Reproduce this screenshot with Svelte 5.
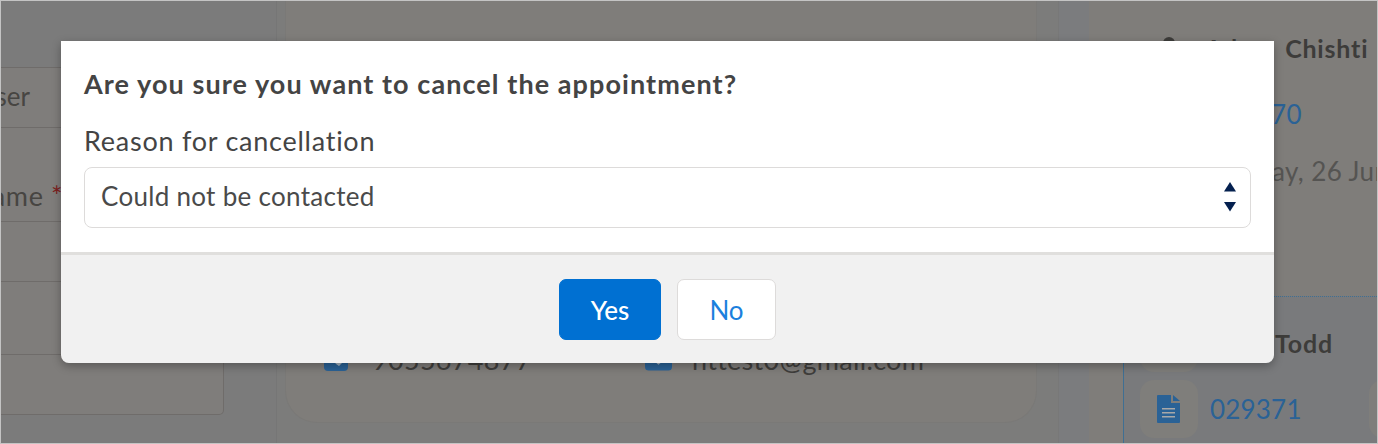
<script>
  let reason = $state('Could not be contacted');
</script>

<div class="page">
  <div class="backdrop-page">
    <section class="left">
      <div class="field user"><span class="field-text">User</span></div>
      <div class="field name"><span class="field-text">Name <b>*</b></span></div>
      <div class="field short"></div>
      <div class="field tall"></div>
      <div class="field box"></div>
    </section>

    <section class="center">
      <div class="card">
        <div class="contact">
          <span class="contact-item phone">
            <svg viewBox="0 0 24 24" class="mini">
              <rect width="24" height="24" rx="4" fill="#2a6296" />
              <path d="M8 10c1 4 3 7 7 9l3-3-4-3-2 1-1-2z" fill="#a8b4c0" />
            </svg>
            9055674877
          </span>
          <span class="contact-item mail">
            <svg viewBox="0 0 28 24" class="mini wide">
              <rect width="28" height="24" rx="4" fill="#2a6296" />
              <path d="M8 13h12l-6 5z" fill="#a8b4c0" />
            </svg>
            nttest0@gmail.com
          </span>
        </div>
      </div>
    </section>

    <div class="strip"></div>

    <section class="right">
      <div class="upper">
        <div class="person">
          <svg viewBox="0 0 24 24" class="person-icon"><circle cx="12" cy="7" r="6" fill="#3d3c3a" /><path d="M1 24c0-6 5-9 11-9s11 3 11 9z" fill="#3d3c3a" /></svg>
          <span>Adam</span>
          <span>Chishti</span>
        </div>
        <div class="num">029370</div>
        <div class="date">Sunday, 26 June</div>
      </div>
      <div class="lower">
        <div class="doc-row todd-row">
          <span class="doc-tile"></span>
          <span class="person todd">Todd</span>
        </div>
        <div class="doc-row">
          <span class="doc-tile">
            <svg viewBox="0 0 24 28" class="doc">
              <path d="M1 0h13v8h9v19a1 1 0 0 1-1 1H1a1 1 0 0 1-1-1V1a1 1 0 0 1 1-1z" fill="#2a6296" />
              <path d="M16 0l7 6h-7z" fill="#2a6296" />
              <path d="M5 13h13v1.600H5zM5 17h13v1.600H5zM5 21h13v1.600H5z" fill="#a8a8a8" />
            </svg>
          </span>
          <span class="doc-num">029371</span>
          <span class="doc-tile"></span>
        </div>
      </div>
    </section>
  </div>

  <div class="modal" role="dialog" aria-modal="true" aria-labelledby="cancel-title">
    <div class="modal-body">
      <h2 id="cancel-title">Are you sure you want to cancel the appointment?</h2>
      <label for="reason">Reason for cancellation</label>
      <div class="select-wrap">
        <select id="reason" bind:value={reason}>
          <option>Could not be contacted</option>
        </select>
        <svg class="arrows" viewBox="0 0 12 30" aria-hidden="true">
          <path d="M6 0l6 9.500H0z" fill="#04204f" />
          <path d="M6 29.500L0 20h12z" fill="#04204f" />
        </svg>
      </div>
    </div>
    <div class="modal-footer">
      <button type="button" class="yes">Yes</button>
      <button type="button" class="no">No</button>
    </div>
  </div>
</div>

<style>
  :global(body) {
    margin: 0;
    font-family: Lato, "Open Sans", sans-serif;
  }
  .page {
    position: relative;
    width: 1378px;
    height: 444px;
    overflow: hidden;
    box-sizing: border-box;
    border: 1px solid #c4c4c4;
    background: #7c7c7c;
  }
  .backdrop-page {
    display: flex;
    height: 100%;
  }
  .left {
    width: 276px;
    flex: none;
    background: #7b7b7b;
    border-right: 1px solid #767676;
    padding-top: 66px;
    box-sizing: border-box;
  }
  .field {
    width: 223px;
    box-sizing: border-box;
    border-top: 1px solid #6f6c6a;
    background: #7f7d7b;
    color: #474542;
    font-size: 27px;
    letter-spacing: 0.6px;
    display: flex;
    white-space: nowrap;
  }
  .field.user {
    height: 60px;
    align-items: center;
    font-size: 26px;
    letter-spacing: 0;
  }
  .field.name {
    height: 94px;
    align-items: flex-end;
    padding-bottom: 9px;
  }
  .field.short {
    height: 60px;
  }
  .field.tall {
    height: 73px;
  }
  .field.box {
    height: 61px;
    border-right: 1px solid #6f6c6a;
    border-bottom: 1px solid #6f6c6a;
    border-radius: 0 0 5px 0;
  }
  .user .field-text {
    margin: -4px 0 0 -24px;
  }
  .name .field-text {
    margin-left: -30px;
  }
  .field b {
    color: #7c2020;
    font-weight: 400;
  }
  .center {
    flex: 1;
    background: #7c7c7b;
    padding: 0 21px 0 8px;
    border-right: 1px solid #787878;
  }
  .card {
    height: 422px;
    box-sizing: border-box;
    border: 1px solid #7a7977;
    border-top: none;
    border-radius: 0 0 32px 32px;
    background: #7f7d7a;
    padding-top: 342px;
  }
  .contact {
    display: flex;
    color: #3f3e3c;
    font-size: 27px;
    letter-spacing: 0.3px;
  }
  .contact-item {
    display: flex;
    align-items: center;
    gap: 24px;
    white-space: nowrap;
  }
  .phone {
    margin-left: 38px;
    width: 321px;
  }
  .mini {
    width: 24px;
    height: 24px;
    margin-bottom: 2px;
  }
  .mini.wide {
    width: 27px;
  }
  .mail {
    gap: 20px;
  }
  .strip {
    width: 30px;
    flex: none;
    background: #7b7c7e;
  }
  .right {
    width: 288px;
    flex: none;
    background: #7f7d7a;
    display: flex;
    flex-direction: column;
    overflow: hidden;
  }
  .upper {
    height: 295px;
    flex: none;
    box-sizing: border-box;
    padding-top: 32px;
    white-space: nowrap;
  }
  .person {
    color: #3d3c3a;
    font-weight: 700;
    font-size: 25px;
    letter-spacing: 0.8px;
  }
  .upper .person {
    display: flex;
    align-items: center;
    padding-left: 68px;
  }
  .person-icon {
    width: 24px;
    height: 24px;
    margin-right: 24px;
  }
  .upper .person span + span {
    margin-left: 12px;
  }
  .num {
    color: #2a6296;
    font-size: 26px;
    letter-spacing: 0.2px;
    margin: 35px 0 0 121px;
  }
  .date {
    color: #555452;
    font-size: 26px;
    letter-spacing: 0.4px;
    margin: 25px 0 0 124px;
  }
  .lower {
    flex: 1;
    margin-left: 34px;
    border-top: 1px dotted #3f6f93;
    border-left: 1px solid #3f6f93;
    background: #797a7c;
    padding: 17px 0 0 16px;
    display: flex;
    flex-direction: column;
    gap: 8px;
  }
  .doc-row {
    display: flex;
    align-items: center;
    gap: 14px;
    white-space: nowrap;
  }
  .todd {
    margin-left: 63px;
    letter-spacing: 0.8px;
  }
  .doc-tile {
    flex: none;
    width: 58px;
    height: 58px;
    background: #7f7e7b;
    border-radius: 14px;
    display: flex;
    align-items: center;
    justify-content: center;
  }
  .doc {
    width: 24px;
    height: 28px;
  }
  .doc-num {
    color: #2a6296;
    font-size: 26px;
    letter-spacing: 0.2px;
    margin: 0 53px 0 -2px;
  }
  .modal {
    position: absolute;
    left: 60px;
    top: 40px;
    width: 1213px;
    height: 322px;
    border-radius: 0 0 8px 8px;
    box-shadow: 0 3px 10px rgba(0, 0, 0, 0.3);
    overflow: hidden;
    display: flex;
    flex-direction: column;
  }
  .modal-body {
    background: #fff;
    height: 214px;
    flex: none;
    box-sizing: border-box;
    padding: 27px 23px 0;
    border-bottom: 3px solid #e0dfdd;
  }
  h2 {
    margin: 0;
    font-size: 27px;
    line-height: 32px;
    font-weight: 700;
    color: #444444;
    letter-spacing: 1.080px;
  }
  label {
    display: block;
    margin-top: 25px;
    font-size: 27px;
    line-height: 32px;
    color: #444444;
    letter-spacing: 0.750px;
  }
  .select-wrap {
    position: relative;
    margin-top: 10px;
  }
  select {
    display: block;
    width: 100%;
    height: 61px;
    box-sizing: border-box;
    appearance: none;
    background: #fff;
    border: 1.500px solid #dddbda;
    border-radius: 8px;
    padding: 0 16px 3px;
    font: inherit;
    font-size: 26px;
    letter-spacing: 0.3px;
    color: #4a4a4a;
  }
  .arrows {
    position: absolute;
    right: 15px;
    top: 15px;
    width: 12px;
    height: 30px;
    pointer-events: none;
  }
  .modal-footer {
    flex: 1;
    background: #f1f1f1;
    display: flex;
    justify-content: center;
    align-items: center;
    gap: 16px;
    padding-top: 1px;
  }
  button {
    font: inherit;
    font-size: 26px;
    border-radius: 7px;
    cursor: pointer;
    padding: 0;
  }
  .yes {
    width: 102px;
    height: 61px;
    background: #0070d2;
    border: 1px solid #0070d2;
    color: #fff;
    font-weight: 500;
  }
  .no {
    width: 99px;
    height: 61px;
    background: #fff;
    border: 1.500px solid #dddbda;
    color: #1b80dd;
  }
</style>
